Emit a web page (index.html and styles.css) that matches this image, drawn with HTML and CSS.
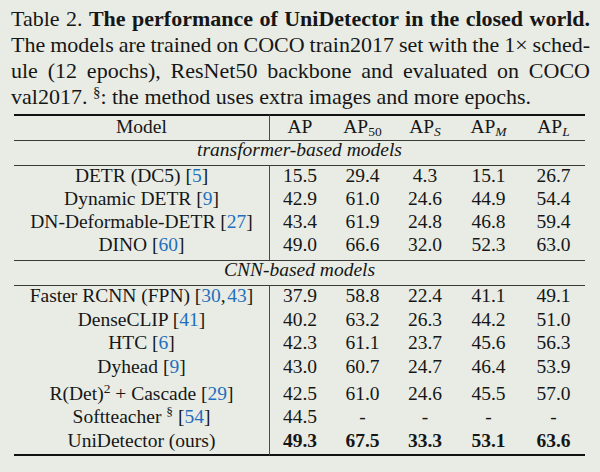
FILE: index.html
```html
<!DOCTYPE html>
<html>
<head>
<meta charset="utf-8">
<link rel="stylesheet" href="styles.css">
</head>
<body>
<div class="page">
  <div class="caption">
    <span class="cline just">Table 2. <b>The performance of UniDetector in the closed world.</b></span>
    <span class="cline just">The models are trained on COCO train2017 set with the 1&times; sched-</span>
    <span class="cline just">ule (12 epochs), ResNet50 backbone and evaluated on COCO</span>
    <span class="cline">val2017. <sup class="csup">&sect;</sup>: the method uses extra images and more epochs.</span>
  </div>
  <table class="tbl">
    <colgroup>
      <col class="c-model"><col class="c-ap"><col class="c-ap50"><col class="c-aps"><col class="c-apm"><col class="c-apl">
    </colgroup>
    <thead>
      <tr class="head">
        <td class="model">Model</td>
        <td>AP</td>
        <td>AP<sub class="sub">50</sub></td>
        <td>AP<sub class="sub it">S</sub></td>
        <td>AP<sub class="sub it">M</sub></td>
        <td>AP<sub class="sub it">L</sub></td>
      </tr>
    </thead>
    <tbody class="g1">
      <tr class="section"><td colspan="6">transformer-based models</td></tr>
      <tr><td class="model">DETR (DC5) <span class="ref">[<a>5</a>]</span></td><td>15.5</td><td>29.4</td><td>4.3</td><td>15.1</td><td>26.7</td></tr>
      <tr><td class="model">Dynamic DETR <span class="ref">[<a>9</a>]</span></td><td>42.9</td><td>61.0</td><td>24.6</td><td>44.9</td><td>54.4</td></tr>
      <tr><td class="model">DN-Deformable-DETR <span class="ref">[<a>27</a>]</span></td><td>43.4</td><td>61.9</td><td>24.8</td><td>46.8</td><td>59.4</td></tr>
      <tr class="last"><td class="model">DINO <span class="ref">[<a>60</a>]</span></td><td>49.0</td><td>66.6</td><td>32.0</td><td>52.3</td><td>63.0</td></tr>
    </tbody>
    <tbody class="g2">
      <tr class="section"><td colspan="6">CNN-based models</td></tr>
      <tr><td class="model">Faster RCNN (FPN) <span class="ref">[<a>30</a>,&#8202;<a>43</a>]</span></td><td>37.9</td><td>58.8</td><td>22.4</td><td>41.1</td><td>49.1</td></tr>
      <tr><td class="model">DenseCLIP <span class="ref">[<a>41</a>]</span></td><td>40.2</td><td>63.2</td><td>26.3</td><td>44.2</td><td>51.0</td></tr>
      <tr><td class="model">HTC <span class="ref">[<a>6</a>]</span></td><td>42.3</td><td>61.1</td><td>23.7</td><td>45.6</td><td>56.3</td></tr>
      <tr><td class="model">Dyhead <span class="ref">[<a>9</a>]</span></td><td>43.0</td><td>60.7</td><td>24.7</td><td>46.4</td><td>53.9</td></tr>
      <tr class="tall"><td class="model">R(Det)<sup class="tsup">2</sup> + Cascade <span class="ref">[<a>29</a>]</span></td><td>42.5</td><td>61.0</td><td>24.6</td><td>45.5</td><td>57.0</td></tr>
      <tr><td class="model">Softteacher <sup class="tsup">&sect;</sup> <span class="ref">[<a>54</a>]</span></td><td>44.5</td><td>-</td><td>-</td><td>-</td><td>-</td></tr>
      <tr class="best"><td class="model">UniDetector (ours)</td><td>49.3</td><td>67.5</td><td>33.3</td><td>53.1</td><td>63.6</td></tr>
    </tbody>
  </table>
</div>
</body>
</html>
```

FILE: styles.css
```css
html, body {
  margin: 0;
  padding: 0;
  background: #e8ece5;
}
.page {
  width: 600px;
  height: 472px;
  background: #e8ece5;
  color: #161616;
  font-family: "Liberation Serif", "Times New Roman", serif;
  overflow: hidden;
}
.caption {
  padding: 5.5px 10px 0 11px;
  font-size: 22px;
  line-height: 26px;
}
.cline {
  display: block;
  white-space: nowrap;
}
.cline.just {
  text-align: justify;
  text-align-last: justify;
  word-spacing: -3px;
}
.csup {
  font-size: 15px;
  line-height: 0;
  vertical-align: 7px;
}
.tbl {
  margin: 4.5px 0 0 14px;
  width: 571px;
  border-collapse: separate;
  border-spacing: 0;
  table-layout: fixed;
  font-size: 19.5px;
}
.c-model { width: 256px; }
.c-ap { width: 60px; }
.c-ap50 { width: 65px; }
.c-aps { width: 60px; }
.c-apm { width: 67px; }
.c-apl { width: 63px; }
.tbl td {
  padding: 0 0 3px 0;
  line-height: 20px;
  text-align: center;
  white-space: nowrap;
  vertical-align: top;
}
.tbl td.model {
  border-right: 1px solid #4a4a4a;
}
.head td {
  border-top: 2px solid #111;
  border-bottom: 1px solid #3a3a3a;
  padding: 1px 0 3px 0;
}
.section td {
  font-style: italic;
  line-height: 18px;
  padding: 0 0 6px 0;
  border-bottom: 1px solid #3a3a3a;
}
.g1 tr.last td {
  padding-bottom: 5px;
  border-bottom: 1px solid #3a3a3a;
}
.g2 td {
  padding-bottom: 3.5px;
}
.g2 tr.section td {
  padding-bottom: 6px;
}
.g2 tr.tall td {
  padding-top: 3.5px;
}
.g2 tr.best td {
  border-bottom: 2px solid #111;
  font-weight: bold;
}
.g2 tr.best td.model {
  font-weight: normal;
}
.sub {
  font-size: 13.5px;
  line-height: 0;
  vertical-align: -3px;
}
.sub.it {
  font-style: italic;
}
.tsup {
  font-size: 13.5px;
  line-height: 0;
  vertical-align: 7px;
}
.ref a {
  color: #1f6fbd;
}
```
